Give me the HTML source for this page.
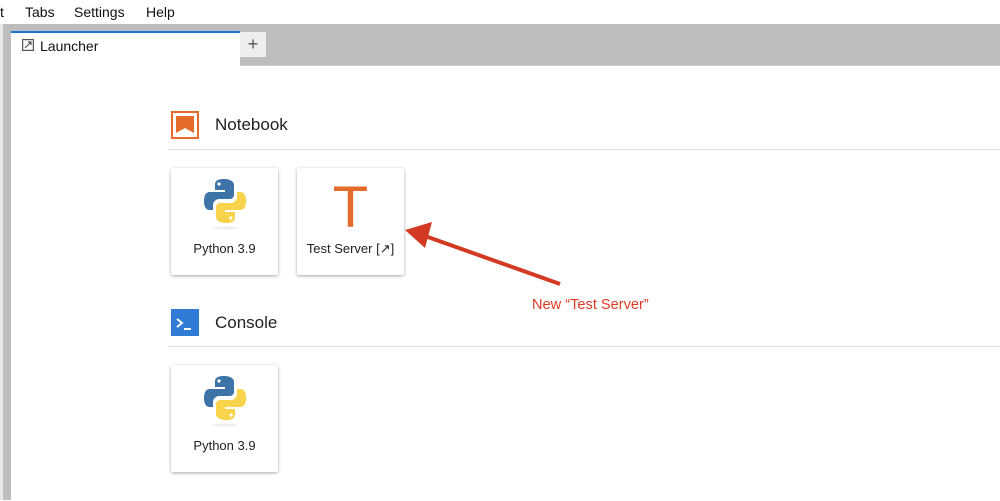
<!DOCTYPE html>
<html><head><style>
body{margin:0;width:1000px;height:500px;overflow:hidden;background:#fff;font-family:"Liberation Sans",Arial,sans-serif;position:relative}
.a{position:absolute}
.card{position:absolute;width:107px;height:107px;background:#fff;box-shadow:0 1px 3px rgba(0,0,0,.35);border-radius:2px}
.card .l{position:absolute;left:0;right:0;top:73px;text-align:center;font-size:13px;color:#222}
.h{font-size:17px;color:#222}
</style></head><body>
<div class="a" style="left:0;top:0;width:1000px;height:24px;background:#fff"></div>
<div class="a" style="left:0;top:4px;font-size:14px;color:#111">t</div>
<div class="a" style="left:25px;top:4px;font-size:14px;color:#111">Tabs</div>
<div class="a" style="left:74px;top:4px;font-size:14px;color:#111">Settings</div>
<div class="a" style="left:146px;top:4px;font-size:14px;color:#111">Help</div>
<div class="a" style="left:0;top:24px;width:1000px;height:42px;background:#bdbdbd"></div>
<div class="a" style="left:0;top:24px;width:3px;height:476px;background:#e8e8e8"></div>
<div class="a" style="left:3px;top:24px;width:8px;height:476px;background:#bdbdbd"></div>
<div class="a" style="left:11px;top:65px;width:989px;height:435px;background:#fff;border-top:1px solid #ccc"></div>
<div class="a" style="left:11px;top:31px;width:229px;height:35px;background:#fff;border-top:2px solid #1976d2;box-sizing:border-box"></div>
<svg class="a" style="left:22px;top:39px" width="12" height="12" viewBox="0 0 12 12"><rect x="0.6" y="0.6" width="10.8" height="10.8" fill="none" stroke="#555" stroke-width="1.2"/><path d="M3 9l6-6M6 3h3v3" fill="none" stroke="#555" stroke-width="1.2"/></svg>
<div class="a" style="left:40px;top:38px;font-size:14px;color:#111">Launcher</div>
<div class="a" style="left:240px;top:32px;width:26px;height:25px;background:#eee;text-align:center;font-size:18px;line-height:24px;color:#555">+</div>

<svg class="a" style="left:171px;top:111px" width="28" height="28"><rect x="1" y="1" width="26" height="26" fill="none" stroke="#e46b29" stroke-width="2"/><path d="M5 5h18v17l-9-5-9 5z" fill="#e46b29"/></svg>
<div class="a h" style="left:215px;top:115px">Notebook</div>
<div class="a" style="left:168px;top:149px;width:832px;height:1px;background:#ddd"></div>

<svg width="0" height="0" style="position:absolute"><defs><g id="py"><path d="M23 3c-9 0-9 4-9 6v5h10v2H9c-4 0-6 3-6 9s2 9 6 9h3v-5c0-3 3-6 6-6h11c2 0 4-2 4-4V9c0-3-3-6-10-6z" fill="#3c74a8"/><circle cx="18" cy="8" r="1.6" fill="#fff"/><path d="M25 47c9 0 9-4 9-6v-5H24v-2h15c4 0 6-3 6-9s-2-9-6-9h-3v5c0 3-3 6-6 6H19c-2 0-4 2-4 4v10c0 3 3 6 10 6z" fill="#f7d44b"/><circle cx="30" cy="42" r="1.6" fill="#fff"/><ellipse cx="24" cy="52" rx="12" ry="1.5" fill="#eee"/></g></defs></svg>
<div class="card" style="left:171px;top:168px"><svg class="a" style="left:30px;top:8px" width="48" height="56"><use href="#py"/></svg><div class="l">Python 3.9</div></div>
<div class="card" style="left:297px;top:168px"><div class="a" style="left:0;right:0;top:8px;text-align:center;font-size:58px;color:#e46b29;line-height:64px">T</div><div class="l">Test Server [↗]</div></div>

<svg class="a" style="left:171px;top:309px" width="28" height="27"><rect width="28" height="27" fill="#2f7bd6"/><path d="M6 10l5 4-5 4" fill="none" stroke="#fff" stroke-width="2"/><path d="M13 20h7" stroke="#fff" stroke-width="2"/></svg>
<div class="a h" style="left:215px;top:313px">Console</div>
<div class="a" style="left:168px;top:346px;width:832px;height:1px;background:#ddd"></div>
<div class="card" style="left:171px;top:365px"><svg class="a" style="left:30px;top:8px" width="48" height="56"><use href="#py"/></svg><div class="l">Python 3.9</div></div>

<svg class="a" style="left:0;top:0" width="1000" height="500"><path d="M560 284L425 236" stroke="#d33a24" stroke-width="4"/><path d="M405 230L432 222L425 248z" fill="#d33a24"/></svg>
<div class="a" style="left:532px;top:297px;font-size:14.6px;color:#e03b24">New “Test Server”</div>
</body></html>
